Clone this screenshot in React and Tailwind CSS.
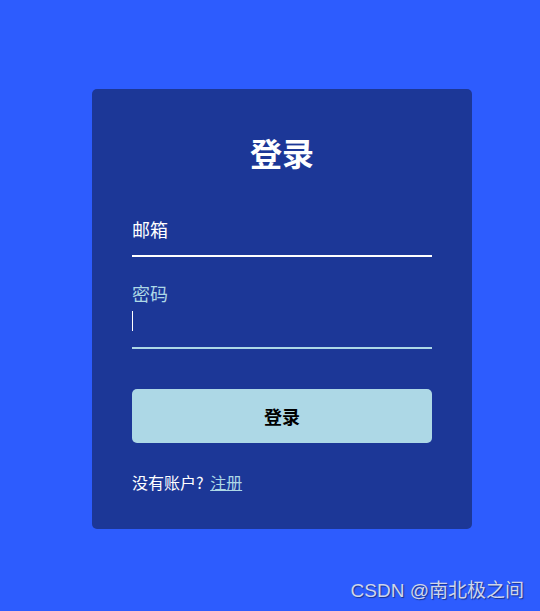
import { useState } from "react";

const cjk = { fontFamily: '"Noto Sans CJK SC", "Noto Sans", sans-serif' };

function LoginCard() {
  const [email, setEmail] = useState("");
  const [password, setPassword] = useState("");

  return (
    <div className="ml-[92px] w-[380px] rounded-[5px] bg-[#1c3797] px-10 pt-[45px] pb-[35px]">
      <h2 className="h-[36px] text-center text-[32px] font-bold leading-[36px] text-white">登录</h2>

      {/* email: label sits in the input area */}
      <div className="relative mt-[47px] border-b-2 border-white pb-[13px]">
        <input
          value={email}
          onChange={(e) => setEmail(e.target.value)}
          className="h-6 w-full bg-transparent text-[18px] text-white outline-none"
        />
        {!email && (
          <label className="pointer-events-none absolute left-0 top-0 text-[18px] leading-6 text-white">邮箱</label>
        )}
      </div>

      {/* password: label moved up, caret shown */}
      <div className="mt-[24px] border-b-2 border-[#add8e6]">
        <label className="block text-[18px] leading-6 text-[#add8e6]">密码</label>
        <div className="flex h-[42px] items-start pt-[6px]">
          <input
            type="password"
            value={password}
            onChange={(e) => setPassword(e.target.value)}
            className="hidden"
          />
          <span className="h-[20px] w-px bg-white" />
        </div>
      </div>

      <button className="mt-10 h-[54px] w-full rounded-[5px] bg-[#add8e6] text-[18px] font-bold leading-[50px] text-black">
        登录
      </button>

      <p className="mt-[27px] text-[16px] leading-6 text-white">
        没有账户? <a className="ml-[3px] text-[#add8e6] underline">注册</a>
      </p>
    </div>
  );
}

export default function App() {
  return (
    <div className="relative min-h-[611px] overflow-hidden bg-[#2d5cfe] pt-[89px]" style={cjk}>
      <LoginCard />
      <span
        className="absolute right-[16px] bottom-[6px] text-[19px] text-[#cfd6ea] [text-shadow:1px_1px_1px_rgba(0,0,0,0.45)]"
        style={{ fontFamily: '"Liberation Sans", "Noto Sans CJK SC", sans-serif' }}
      >
        CSDN @南北极之间
      </span>
    </div>
  );
}
